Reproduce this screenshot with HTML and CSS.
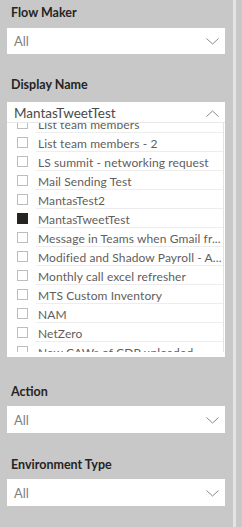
FILE: index.html
```html
<!DOCTYPE html>
<html>
<head>
<meta charset="utf-8">
<link rel="stylesheet" href="styles.css">
</head>
<body>
<div class="page">
  <div class="pane">
    <section class="card maker">
      <div class="label">Flow Maker</div>
      <div class="select">
        <span class="value">All</span>
        <svg class="chev" width="13" height="7" viewBox="0 0 13 7"><polyline points="0.5,0.5 6.5,6 12.5,0.5" fill="none" stroke="#8a8a8a" stroke-width="1"/></svg>
      </div>
    </section>

    <section class="card open">
      <div class="label">Display Name</div>
      <div class="select head">
        <span class="value dark">MantasTweetTest</span>
        <svg class="chev" width="13" height="7" viewBox="0 0 13 7"><polyline points="0.5,6.5 6.5,1 12.5,6.5" fill="none" stroke="#8a8a8a" stroke-width="1"/></svg>
      </div>
      <div class="list">
        <div class="viewport">
          <ul class="items">
            <li><span class="box"></span><span class="txt">List team members</span></li>
            <li><span class="box"></span><span class="txt">List team members - 2</span></li>
            <li><span class="box"></span><span class="txt">LS summit - networking request</span></li>
            <li><span class="box"></span><span class="txt">Mail Sending Test</span></li>
            <li><span class="box"></span><span class="txt">MantasTest2</span></li>
            <li class="checked"><span class="box"></span><span class="txt">MantasTweetTest</span></li>
            <li><span class="box"></span><span class="txt">Message in Teams when Gmail fr...</span></li>
            <li><span class="box"></span><span class="txt">Modified and Shadow Payroll - A...</span></li>
            <li><span class="box"></span><span class="txt">Monthly call excel refresher</span></li>
            <li><span class="box"></span><span class="txt">MTS Custom Inventory</span></li>
            <li><span class="box"></span><span class="txt">NAM</span></li>
            <li><span class="box"></span><span class="txt">NetZero</span></li>
            <li><span class="box"></span><span class="txt">New CAWs of CDP uploaded</span></li>
          </ul>
        </div>
      </div>
    </section>

    <section class="card action">
      <div class="label">Action</div>
      <div class="select tall">
        <span class="value">All</span>
        <svg class="chev" width="13" height="7" viewBox="0 0 13 7"><polyline points="0.5,0.5 6.5,6 12.5,0.5" fill="none" stroke="#8a8a8a" stroke-width="1"/></svg>
      </div>
    </section>

    <section class="card env">
      <div class="label">Environment Type</div>
      <div class="select tall">
        <span class="value">All</span>
        <svg class="chev" width="13" height="7" viewBox="0 0 13 7"><polyline points="0.5,0.5 6.5,6 12.5,0.5" fill="none" stroke="#8a8a8a" stroke-width="1"/></svg>
      </div>
    </section>
  </div>
  <div class="strip"></div>
  <div class="rest"></div>
</div>
</body>
</html>
```

FILE: styles.css
```css
* { box-sizing: border-box; margin: 0; padding: 0; }
html, body { background: #c8c8c8; }
body {
  width: 242px;
  height: 527px;
  overflow: hidden;
  font-family: "Lato", "Open Sans", sans-serif;
}
.page {
  display: flex;
  height: 527px;
}
.pane {
  width: 233px;
  padding: 3px 8px 0 7px;
  display: flex;
  flex-direction: column;
}
.strip {
  width: 3px;
  background: #e4e4e4;
}
.rest { flex: 1; background: #c8c8c8; }

.card { display: flex; flex-direction: column; }
.label {
  font-weight: 700;
  font-size: 12.5px;
  color: #252423;
  padding-left: 4px;
  height: 20px;
  line-height: 20px;
  margin-bottom: 4px;
}
.maker .label { margin-bottom: 5px; }
.open { margin-top: 21px; }
.open .label { margin-bottom: 7px; }
.action { margin-top: 25px; }
.env { margin-top: 22px; }

.select {
  background: #ffffff;
  height: 26px;
  display: flex;
  align-items: center;
  justify-content: space-between;
  padding: 0 6px 0 7px;
}
.select.tall { height: 27px; }
.value {
  font-size: 13px;
  color: #7f7f7f;
}
.value.dark { color: #4a4a4a; font-size: 13.5px; }
.chev { display: block; margin-top: 1px; }

.select.head {
  height: 21px;
  align-items: flex-end;
  padding-bottom: 1px;
  border-bottom: 1px solid #e8e8e8;
}
.select.head .chev { margin-bottom: 4px; }

.list {
  background: #ffffff;
  height: 234px;
  padding-bottom: 5px;
}
.viewport {
  height: 229px;
  overflow: hidden;
  border-right: 1px solid #e4e4e4;
  margin-right: 1px;
}
.items {
  list-style: none;
  margin-top: -10px;
}
.items li {
  height: 19px;
  display: flex;
  align-items: center;
  padding-left: 10px;
}
.box {
  width: 11px;
  height: 11px;
  border: 1px solid #bdbdbd;
  background: #fff;
  flex: none;
  margin-right: 8px;
  margin-top: 1px;
}
.checked .box {
  background: #252423;
  border-color: #252423;
}
.txt {
  flex: 1;
  height: 19px;
  line-height: 19px;
  padding-left: 2px;
  padding-top: 1px;
  font-size: 12px;
  letter-spacing: 0.1px;
  color: #5f5e5c;
  border-top: 1px solid #ededed;
  white-space: nowrap;
  overflow: hidden;
}
```
